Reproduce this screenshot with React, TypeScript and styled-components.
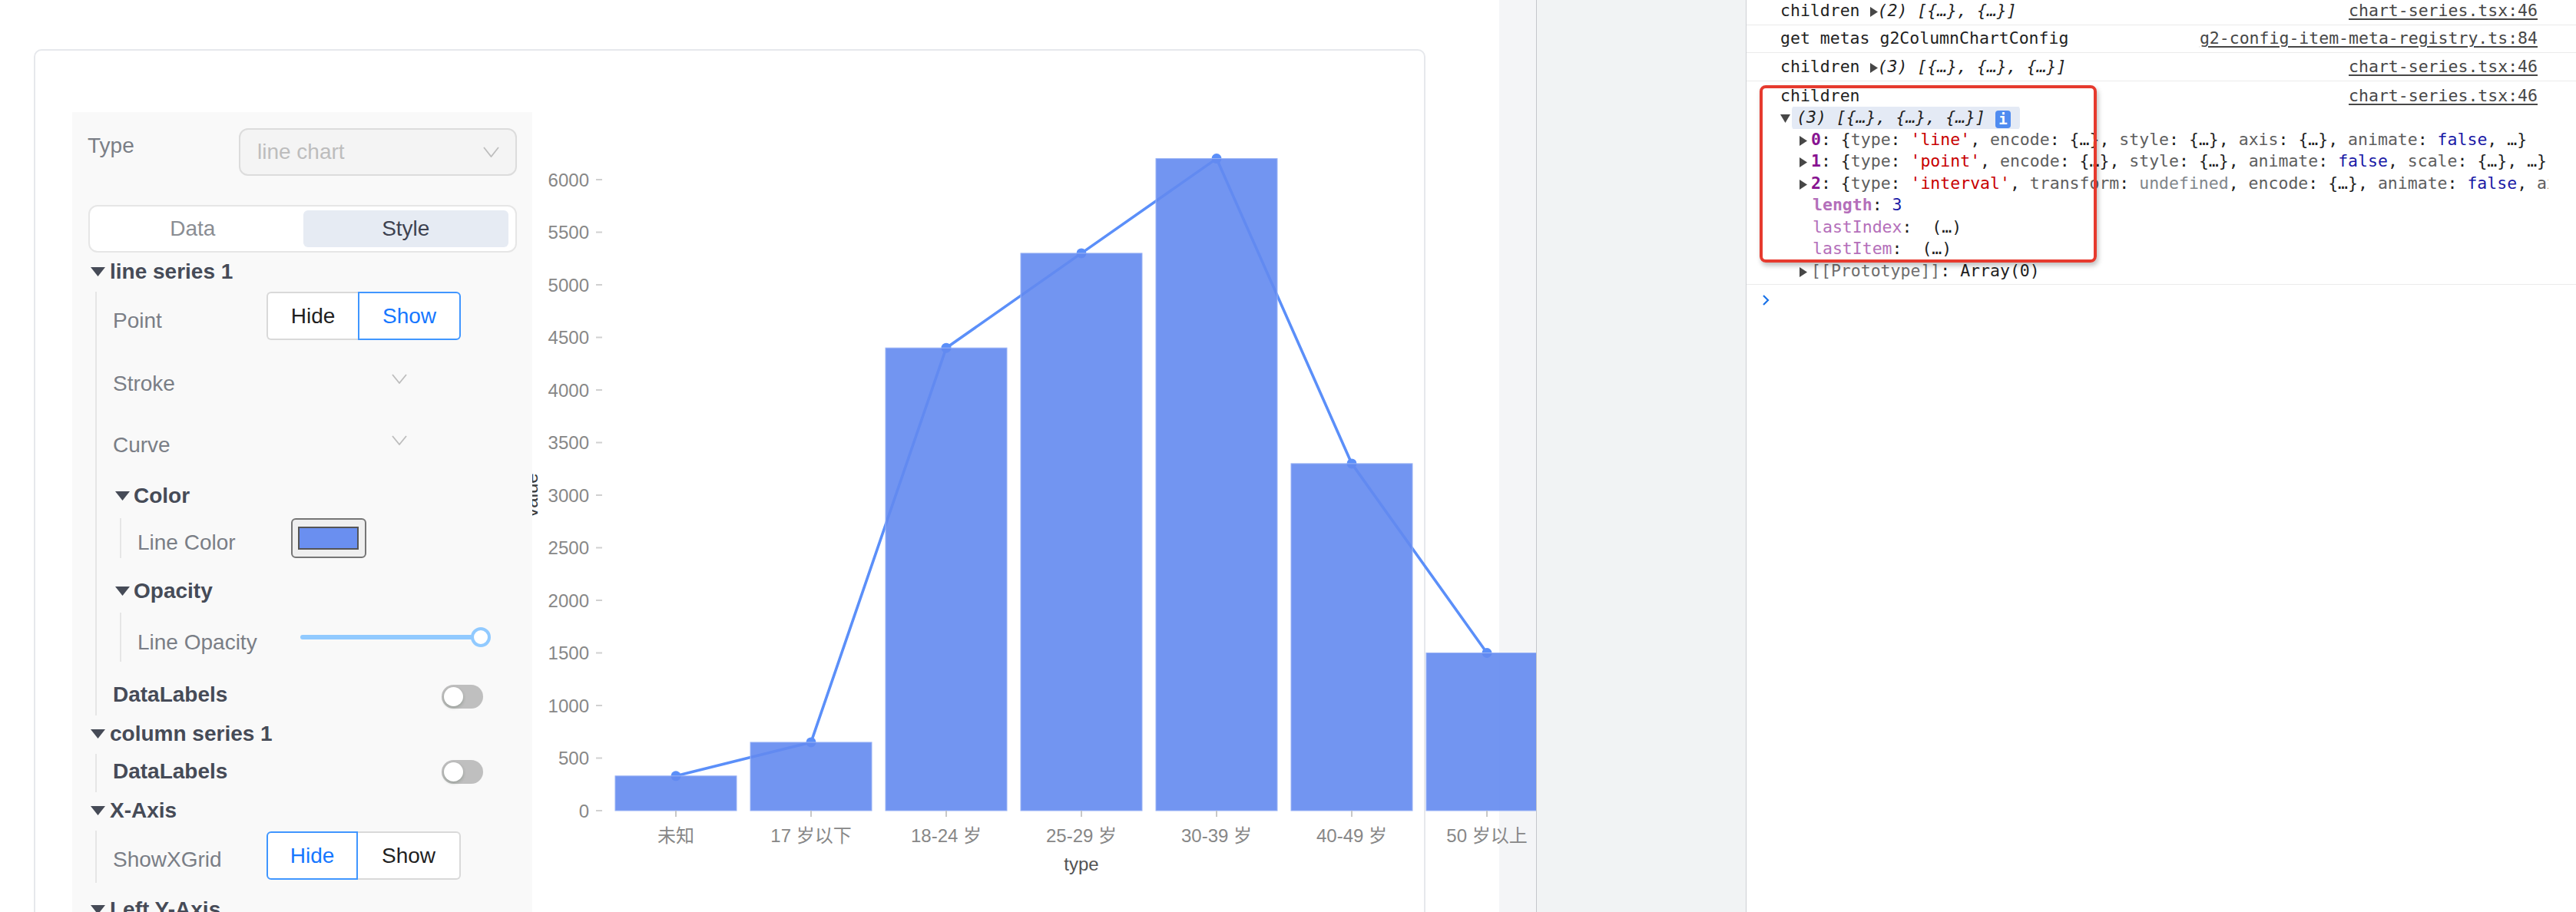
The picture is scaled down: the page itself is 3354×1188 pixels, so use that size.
import React from "react";
import styled, { createGlobalStyle } from "styled-components";

const Global = createGlobalStyle`
  html, body { margin: 0; padding: 0; height: 100%; overflow: hidden; background: #fff; }
  body { font-family: "Liberation Sans", Arial, "Noto Sans CJK SC", sans-serif; }
  #root { height: 1188px; }
`;

const Root = styled.div`
  display: flex;
  width: 3354px;
  height: 1188px;
  overflow: hidden;
`;

/* ---------------- page (left) ---------------- */

const PageArea = styled.main`
  flex: 0 0 2000px;
  height: 100%;
  box-sizing: border-box;
  overflow: hidden;
  padding: 64px 0 0 44px;
  background: linear-gradient(to right, #ffffff 1952px, #f4f5f7 1952px);
`;

const Card = styled.div`
  width: 1812px;
  height: 1400px;
  box-sizing: border-box;
  border: 2px solid #e6e8ec;
  border-radius: 10px;
  padding: 80px 0 0 48px;
  display: flex;
`;

const Sidebar = styled.aside`
  flex: 0 0 599px;
  box-sizing: border-box;
  background: #f9f9f9;
  padding: 21px 20px 0 20px;
`;

const TypeRow = styled.div`
  display: flex;
  align-items: flex-start;
`;

const TypeLabel = styled.div`
  flex: 0 0 197px;
  padding-top: 7px;
  font-size: 28px;
  line-height: 32px;
  color: #7a7e86;
`;

const SelectBox = styled.div`
  width: 362px;
  height: 62px;
  box-sizing: border-box;
  border: 2px solid #dcdcdc;
  border-radius: 12px;
  background: #f4f4f4;
  display: flex;
  align-items: center;
  justify-content: space-between;
  padding: 0 21px 0 22px;
  font-size: 28px;
  color: #bdbdbd;
`;

const Tabs = styled.div`
  margin: 38px 0 0 1px;
  height: 62px;
  box-sizing: border-box;
  border: 2px solid #e6e6e6;
  border-radius: 12px;
  background: #fff;
  display: grid;
  grid-template-columns: 1fr 1fr;
  column-gap: 10px;
  padding: 5px 9px 5px 0;
`;

const Tab = styled.div<{ $active?: boolean }>`
  display: flex;
  align-items: center;
  justify-content: center;
  border-radius: 6px;
  font-size: 28px;
  background: ${(p) => (p.$active ? "#e6ebf3" : "transparent")};
  color: ${(p) => (p.$active ? "#3d4250" : "#8a8d93")};
`;

const SectionHeader = styled.div<{ $h: number; $nested?: boolean }>`
  height: ${(p) => p.$h}px;
  display: flex;
  align-items: center;
  gap: ${(p) => (p.$nested ? 5 : 6)}px;
  padding-left: ${(p) => (p.$nested ? 3 : 4)}px;
  font-size: 28px;
  font-weight: 700;
  color: #464b57;
`;

const SectionBody = styled.div<{ $mt: number; $mb: number; $nested?: boolean }>`
  margin: ${(p) => p.$mt}px 0 ${(p) => p.$mb}px ${(p) => (p.$nested ? 9 : 10)}px;
  border-left: 2px solid #e6e6e6;
  padding-left: 21px;
`;

const Row = styled.div<{ $h: number }>`
  display: flex;
  align-items: flex-start;
  height: ${(p) => p.$h}px;
`;

const Label = styled.div<{ $top: number; $strong?: boolean }>`
  flex: 0 0 200px;
  margin-top: ${(p) => p.$top}px;
  font-size: 28px;
  line-height: 32px;
  white-space: nowrap;
  color: ${(p) => (p.$strong ? "#464b57" : "#7a7e86")};
  font-weight: ${(p) => (p.$strong ? 700 : 400)};
`;

const Control = styled.div<{ $top: number; $left?: number }>`
  display: flex;
  align-items: center;
  margin-top: ${(p) => p.$top}px;
  margin-left: ${(p) => p.$left ?? 0}px;
`;

const SegGroup = styled.div`
  display: flex;
  height: 63px;
`;

const SegBtn = styled.div<{ $active: boolean; $pos: "left" | "right"; $w: number }>`
  width: ${(p) => p.$w}px;
  box-sizing: border-box;
  display: flex;
  align-items: center;
  justify-content: center;
  background: #fff;
  font-size: 28px;
  color: ${(p) => (p.$active ? "#1677ff" : "#1f1f1f")};
  border: 2px solid ${(p) => (p.$active ? "#4096ff" : "#d9d9d9")};
  border-radius: ${(p) => (p.$pos === "left" ? "6px 0 0 6px" : "0 6px 6px 0")};
  ${(p) => (!p.$active && p.$pos === "left" ? "border-right: none;" : "")}
  ${(p) => (!p.$active && p.$pos === "right" ? "border-left: none;" : "")}
`;

const Toggle = styled.div`
  width: 54px;
  height: 31px;
  box-sizing: border-box;
  border-radius: 16px;
  background: #bfbfbf;
  padding: 3px;
  display: flex;
`;

const Knob = styled.div`
  width: 25px;
  height: 25px;
  border-radius: 50%;
  background: #fff;
  box-shadow: 0 2px 4px rgba(0, 35, 11, 0.22);
`;

const Swatch = styled.div`
  width: 98px;
  height: 52px;
  box-sizing: border-box;
  border: 2px solid #767676;
  border-radius: 6px;
  background: #efefef;
  padding: 9px 8px 9px 7px;
  display: flex;
`;

const SwatchFill = styled.div`
  flex: 1;
  background: #6a8ff0;
  border: 2px solid #555;
`;

const SliderWrap = styled.div`
  display: flex;
  align-items: center;
  height: 26px;
  padding-left: 12px;
`;

const SliderTrack = styled.div`
  width: 235px;
  height: 6px;
  border-radius: 3px;
  background: #91caff;
`;

const SliderThumb = styled.div`
  width: 26px;
  height: 26px;
  box-sizing: border-box;
  margin-left: -13px;
  border-radius: 50%;
  background: #fff;
  border: 4px solid #91caff;
`;

const ChartWrap = styled.div`
  flex: 0 0 1340px;
`;

/* ---------------- devtools (right) ---------------- */

const DevSide = styled.div`
  flex: 0 0 274px;
  box-sizing: border-box;
  background: #f1f3f4;
  border-left: 1px solid #c4c7cb;
  border-right: 1px solid #cdd0d4;
`;

const Console = styled.section`
  flex: 1 1 auto;
  position: relative;
  background: #fff;
  overflow: hidden;
  font-family: "DejaVu Sans Mono", "Liberation Mono", monospace;
  font-size: 21.5px;
  line-height: 28.5px;
  color: #1f1f1f;
  white-space: pre;
`;

const LogList = styled.div`
  margin-top: -4px;
`;

const LogRow = styled.div<{ $pt?: number; $pb?: number }>`
  padding: ${(p) => p.$pt ?? 3.5}px 0 ${(p) => p.$pb ?? 3.5}px 44px;
  border-bottom: 1px solid #ebebeb;
`;

const LogLine = styled.div`
  display: flex;
  justify-content: space-between;
  padding-right: 50px;
`;

const SourceLink = styled.span`
  color: #474747;
  text-decoration: underline;
  text-underline-offset: 3px;
`;

const TreeLine = styled.div<{ $indent: number }>`
  padding-left: ${(p) => p.$indent}px;
  margin-right: 36px;
  overflow: hidden;
`;

const ArrowBox = styled.span<{ $w: number }>`
  display: inline-block;
  width: ${(p) => p.$w}px;
`;

const Highlight = styled.span`
  display: inline-block;
  background: #e4eaf5;
  border-radius: 6px;
  padding: 2px 12px 2px 6px;
  margin: -2px 0 -2px 2px;
  line-height: 28.5px;
`;

const InfoIcon = styled.span`
  display: inline-block;
  width: 20px;
  height: 23px;
  border-radius: 4px;
  background: #4f8bf0;
  color: #fff;
  font-weight: 700;
  font-size: 19px;
  line-height: 23px;
  text-align: center;
  vertical-align: -2px;
  font-style: normal;
`;

const RedBox = styled.div`
  position: absolute;
  left: 17px;
  top: 111px;
  width: 439px;
  height: 231px;
  box-sizing: border-box;
  border: 4px solid #e63a2e;
  border-radius: 8px;
  box-shadow: 2px 4px 6px rgba(0, 0, 0, 0.25);
`;

const Prompt = styled.div`
  padding: 6px 0 0 20px;
  height: 28px;
  display: flex;
  align-items: center;
`;

const Key = styled.span`
  color: #881391;
  font-weight: 700;
`;
const PName = styled.span`
  color: #5e5e5e;
`;
const Str = styled.span`
  color: #c80000;
`;
const Lit = styled.span`
  color: #1a1aa6;
`;
const Undef = styled.span`
  color: #80868b;
`;
const Dim = styled.span<{ $bold?: boolean }>`
  color: #b46fba;
  font-weight: ${(p) => (p.$bold ? 700 : 400)};
`;
const Ital = styled.span`
  font-style: italic;
`;
const Proto = styled.span`
  color: #6e6e6e;
`;

/* ---------------- icons ---------------- */

const Chevron = ({ w = 20, h = 13 }: { w?: number; h?: number }) => (
  <svg width={w} height={h} viewBox={`0 0 ${w} ${h}`}>
    <polyline points={`1,1 ${w / 2},${h - 1} ${w - 1},1`} fill="none" stroke="#bdbdbd" strokeWidth="1.8" />
  </svg>
);

const Caret = () => (
  <svg width="19" height="12" viewBox="0 0 19 12">
    <polygon points="0,0 19,0 9.5,12" fill="#464b57" />
  </svg>
);

const TriRight = () => (
  <svg width="10" height="13" viewBox="0 0 10 13" style={{ verticalAlign: "-1px" }}>
    <polygon points="0,0 10,6.5 0,13" fill="#474747" />
  </svg>
);

const TriDown = () => (
  <svg width="13" height="11" viewBox="0 0 13 11" style={{ verticalAlign: "0px" }}>
    <polygon points="0,0 13,0 6.5,11" fill="#474747" />
  </svg>
);

/* ---------------- chart ---------------- */

const data = [
  { label: "未知", value: 330 },
  { label: "17 岁以下", value: 650 },
  { label: "18-24 岁", value: 4400 },
  { label: "25-29 岁", value: 5300 },
  { label: "30-39 岁", value: 6200 },
  { label: "40-49 岁", value: 3300 },
  { label: "50 岁以上", value: 1500 },
];

const Y0 = 910;
const KY = 0.137;
const X0 = 99;
const STEP = 176;
const BW = 158;
const yOf = (v: number) => Y0 - v * KY;
const cx = (i: number) => X0 + STEP * i + STEP / 2;

const AXIS_FONT = '"Liberation Sans", Arial, "Noto Sans CJK SC", sans-serif';

const Chart = () => {
  const ticks = Array.from({ length: 13 }, (_, i) => i * 500);
  const linePts = data.map((d, i) => `${cx(i)},${yOf(d.value)}`).join(" ");
  return (
    <svg width="1340" height="1050" viewBox="0 0 1340 1050">
      {ticks.map((t) => (
        <g key={t}>
          <text
            x={74}
            y={yOf(t)}
            textAnchor="end"
            dominantBaseline="central"
            fontSize="24"
            fontFamily={AXIS_FONT}
            fill="#878787"
          >
            {t}
          </text>
          <line x1={83} x2={91} y1={yOf(t)} y2={yOf(t)} stroke="#d0d0d0" strokeWidth="2" />
        </g>
      ))}
      <polyline points={linePts} fill="none" stroke="#5b8ff9" strokeWidth="3.6" strokeLinejoin="round" />
      {data.map((d, i) => (
        <circle key={`p${i}`} cx={cx(i)} cy={yOf(d.value)} r="6.5" fill="#5b8ff9" />
      ))}
      {data.map((d, i) => (
        <rect
          key={`b${i}`}
          x={X0 + STEP * i + 9}
          y={yOf(d.value)}
          width={BW}
          height={Y0 - yOf(d.value)}
          fill="#6389ef"
          fillOpacity="0.9"
          stroke="#9ab3f5"
          strokeWidth="1"
        />
      ))}
      {data.map((d, i) => (
        <g key={`x${i}`}>
          <line x1={cx(i)} x2={cx(i)} y1={Y0} y2={Y0 + 8} stroke="#c8c8c8" strokeWidth="2" />
          <text
            x={cx(i)}
            y={942}
            textAnchor="middle"
            dominantBaseline="central"
            fontSize="24"
            fontFamily={AXIS_FONT}
            fill="#878787"
          >
            {d.label}
          </text>
        </g>
      ))}
      <text x={715} y={979} textAnchor="middle" dominantBaseline="central" fontSize="24" fontFamily={AXIS_FONT} fill="#545454">
        type
      </text>
      <text
        x={7}
        y={499}
        transform="rotate(-90 7 499)"
        textAnchor="middle"
        fontSize="24"
        fontFamily={AXIS_FONT}
        fill="#3a3a3a"
      >
        value
      </text>
    </svg>
  );
};

/* ---------------- pieces ---------------- */

const Seg = ({ active }: { active: "left" | "right" }) => (
  <SegGroup>
    <SegBtn $pos="left" $active={active === "left"} $w={119}>
      Hide
    </SegBtn>
    <SegBtn $pos="right" $active={active === "right"} $w={134}>
      Show
    </SegBtn>
  </SegGroup>
);

const Switch = () => (
  <Toggle>
    <Knob />
  </Toggle>
);

export default function App() {
  return (
    <>
      <Global />
      <Root>
        <PageArea>
          <Card>
            <Sidebar>
              <TypeRow>
                <TypeLabel>Type</TypeLabel>
                <SelectBox>
                  <span>line chart</span>
                  <Chevron w={21} h={14} />
                </SelectBox>
              </TypeRow>
              <Tabs>
                <Tab>Data</Tab>
                <Tab $active>Style</Tab>
              </Tabs>

              <SectionHeader $h={49}>
                <Caret />
                <span>line series 1</span>
              </SectionHeader>
              <SectionBody $mt={2} $mb={0}>
                <Row $h={78}>
                  <Label $top={22}>Point</Label>
                  <Control $top={0}>
                    <Seg active="right" />
                  </Control>
                </Row>
                <Row $h={80}>
                  <Label $top={26}>Stroke</Label>
                  <Control $top={29} $left={163}>
                    <Chevron />
                  </Control>
                </Row>
                <Row $h={80}>
                  <Label $top={26}>Curve</Label>
                  <Control $top={29} $left={163}>
                    <Chevron />
                  </Control>
                </Row>

                <SectionHeader $h={56} $nested>
                  <Caret />
                  <span>Color</span>
                </SectionHeader>
                <SectionBody $mt={1} $mb={15} $nested>
                  <Row $h={52}>
                    <Label $top={16}>Line Color</Label>
                    <Control $top={0}>
                      <Swatch>
                        <SwatchFill />
                      </Swatch>
                    </Control>
                  </Row>
                </SectionBody>

                <SectionHeader $h={56} $nested>
                  <Caret />
                  <span>Opacity</span>
                </SectionHeader>
                <SectionBody $mt={0} $mb={8} $nested>
                  <Row $h={64}>
                    <Label $top={23}>Line Opacity</Label>
                    <Control $top={19}>
                      <SliderWrap>
                        <SliderTrack />
                        <SliderThumb />
                      </SliderWrap>
                    </Control>
                  </Row>
                </SectionBody>

                <Row $h={62}>
                  <Label $top={19} $strong>
                    DataLabels
                  </Label>
                  <Control $top={22} $left={228}>
                    <Switch />
                  </Control>
                </Row>
              </SectionBody>

              <SectionHeader $h={48}>
                <Caret />
                <span>column series 1</span>
              </SectionHeader>
              <SectionBody $mt={2} $mb={0}>
                <Row $h={50}>
                  <Label $top={7} $strong>
                    DataLabels
                  </Label>
                  <Control $top={8} $left={228}>
                    <Switch />
                  </Control>
                </Row>
              </SectionBody>

              <SectionHeader $h={48}>
                <Caret />
                <span>X-Axis</span>
              </SectionHeader>
              <SectionBody $mt={2} $mb={11}>
                <Row $h={68}>
                  <Label $top={22}>ShowXGrid</Label>
                  <Control $top={1}>
                    <Seg active="left" />
                  </Control>
                </Row>
              </SectionBody>

              <SectionHeader $h={48}>
                <Caret />
                <span>Left Y-Axis</span>
              </SectionHeader>
            </Sidebar>
            <ChartWrap>
              <Chart />
            </ChartWrap>
          </Card>
        </PageArea>

        <DevSide />

        <Console>
          <LogList>
            <LogRow>
              <LogLine>
                <span>
                  children <TriRight />
                  <Ital>(2) [{"{…}"}, {"{…}"}]</Ital>
                </span>
                <SourceLink>chart-series.tsx:46</SourceLink>
              </LogLine>
            </LogRow>
            <LogRow>
              <LogLine>
                <span>get metas g2ColumnChartConfig</span>
                <SourceLink>g2-config-item-meta-registry.ts:84</SourceLink>
              </LogLine>
            </LogRow>
            <LogRow>
              <LogLine>
                <span>
                  children <TriRight />
                  <Ital>(3) [{"{…}"}, {"{…}"}, {"{…}"}]</Ital>
                </span>
                <SourceLink>chart-series.tsx:46</SourceLink>
              </LogLine>
            </LogRow>
            <LogRow $pt={5} $pb={3}>
              <LogLine>
                <span>children</span>
                <SourceLink>chart-series.tsx:46</SourceLink>
              </LogLine>
              <TreeLine $indent={0}>
                <TriDown />
                <Highlight>
                  <Ital>(3) [{"{…}"}, {"{…}"}, {"{…}"}]</Ital> <InfoIcon>i</InfoIcon>
                </Highlight>
              </TreeLine>
              <TreeLine $indent={25}>
                <ArrowBox $w={15}>
                  <TriRight />
                </ArrowBox>
                <Key>0</Key>: {"{"}
                <PName>type</PName>: <Str>'line'</Str>, <PName>encode</PName>: {"{…}"}, <PName>style</PName>: {"{…}"},{" "}
                <PName>axis</PName>: {"{…}"}, <PName>animate</PName>: <Lit>false</Lit>, {"…}"}
              </TreeLine>
              <TreeLine $indent={25}>
                <ArrowBox $w={15}>
                  <TriRight />
                </ArrowBox>
                <Key>1</Key>: {"{"}
                <PName>type</PName>: <Str>'point'</Str>, <PName>encode</PName>: {"{…}"}, <PName>style</PName>: {"{…}"},{" "}
                <PName>animate</PName>: <Lit>false</Lit>, <PName>scale</PName>: {"{…}"}, {"…}"}
              </TreeLine>
              <TreeLine $indent={25}>
                <ArrowBox $w={15}>
                  <TriRight />
                </ArrowBox>
                <Key>2</Key>: {"{"}
                <PName>type</PName>: <Str>'interval'</Str>, <PName>transform</PName>: <Undef>undefined</Undef>,{" "}
                <PName>encode</PName>: {"{…}"}, <PName>animate</PName>: <Lit>false</Lit>, <PName>axis</PName>: {"{…}"}, {"…}"}
              </TreeLine>
              <TreeLine $indent={42}>
                <Dim $bold>length</Dim>: <Lit>3</Lit>
              </TreeLine>
              <TreeLine $indent={42}>
                <Dim>lastIndex</Dim>:  (…)
              </TreeLine>
              <TreeLine $indent={42}>
                <Dim>lastItem</Dim>:  (…)
              </TreeLine>
              <TreeLine $indent={25}>
                <ArrowBox $w={15}>
                  <TriRight />
                </ArrowBox>
                <Proto>[[Prototype]]</Proto>: Array(0)
              </TreeLine>
            </LogRow>
          </LogList>
          <Prompt>
            <svg width="10" height="16" viewBox="0 0 10 16">
              <polyline points="2,2 8,8 2,14" fill="none" stroke="#1a73e8" strokeWidth="2.2" />
            </svg>
          </Prompt>
          <RedBox />
        </Console>
      </Root>
    </>
  );
}
